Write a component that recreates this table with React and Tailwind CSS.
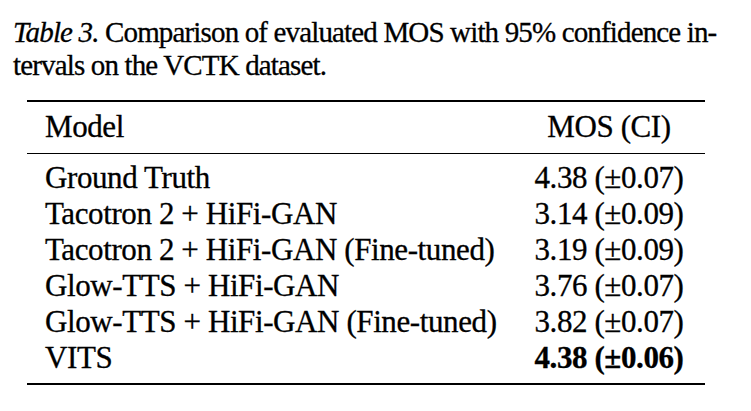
export default function App() {
  const rows = [
    ["Ground Truth", "4.38 (±0.07)"],
    ["Tacotron 2 + HiFi-GAN", "3.14 (±0.09)"],
    ["Tacotron 2 + HiFi-GAN (Fine-tuned)", "3.19 (±0.09)"],
    ["Glow-TTS + HiFi-GAN", "3.76 (±0.07)"],
    ["Glow-TTS + HiFi-GAN (Fine-tuned)", "3.82 (±0.07)"],
  ];

  return (
    <div className="w-[751px] h-[411px] bg-white text-black font-['Liberation_Serif',serif] [-webkit-text-stroke:0.3px_black] overflow-hidden">
      <p className="pl-[13px] pt-[16px] text-[29px] leading-[33px] tracking-[-0.85px]">
        <span className="italic">Table 3.</span> Comparison of evaluated MOS with 95% confidence in-
        <br />
        tervals on the VCTK dataset.
      </p>

      <div className="ml-[27px] mt-[18px] w-[678px] border-t-2 border-b-2 border-black text-[31px] leading-[36px] tracking-[-0.4px]">
        <div className="grid grid-cols-[1fr_auto] pt-[7px] pb-[8px] border-b border-black">
          <div className="pl-[18px]">Model</div>
          <div className="pr-[20px] w-[172px] text-center">MOS (CI)</div>
        </div>
        <div className="pt-[6px] pb-[7px]">
          {rows.map(([name, mos]) => (
            <div key={name} className="grid grid-cols-[1fr_auto]">
              <div className="pl-[18px]">{name}</div>
              <div className="pr-[20px] w-[172px] text-center">{mos}</div>
            </div>
          ))}
          <div className="grid grid-cols-[1fr_auto]">
            <div className="pl-[18px]">VITS</div>
            <div className="pr-[20px] w-[172px] text-center font-bold">4.38 (±0.06)</div>
          </div>
        </div>
      </div>
    </div>
  );
}
